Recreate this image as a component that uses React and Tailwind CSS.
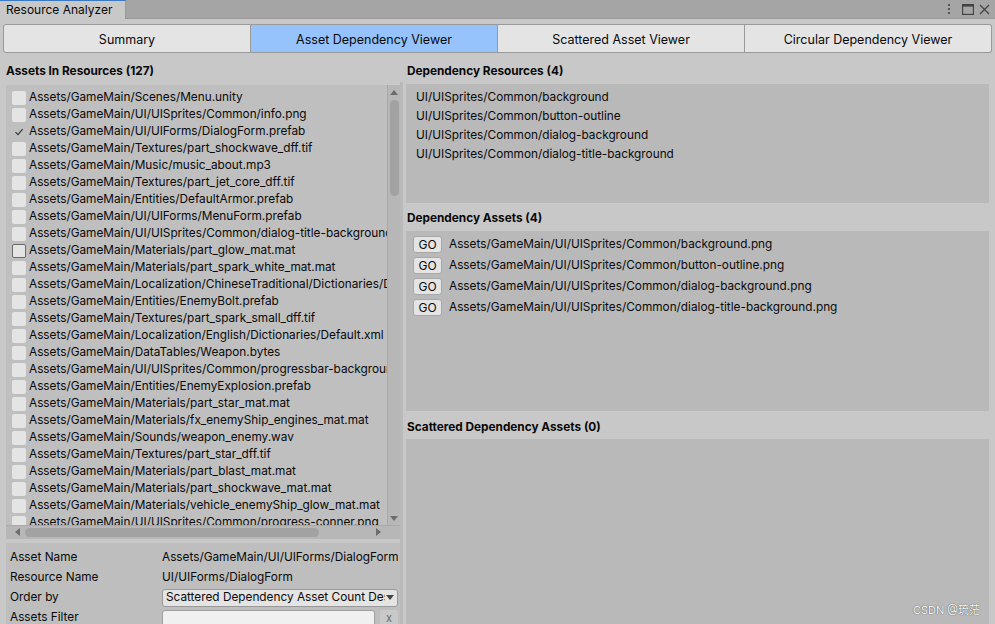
import React from "react";

const assets = [
  "Assets/GameMain/Scenes/Menu.unity",
  "Assets/GameMain/UI/UISprites/Common/info.png",
  "Assets/GameMain/UI/UIForms/DialogForm.prefab",
  "Assets/GameMain/Textures/part_shockwave_dff.tif",
  "Assets/GameMain/Music/music_about.mp3",
  "Assets/GameMain/Textures/part_jet_core_dff.tif",
  "Assets/GameMain/Entities/DefaultArmor.prefab",
  "Assets/GameMain/UI/UIForms/MenuForm.prefab",
  "Assets/GameMain/UI/UISprites/Common/dialog-title-background.png",
  "Assets/GameMain/Materials/part_glow_mat.mat",
  "Assets/GameMain/Materials/part_spark_white_mat.mat",
  "Assets/GameMain/Localization/ChineseTraditional/Dictionaries/Default.xml",
  "Assets/GameMain/Entities/EnemyBolt.prefab",
  "Assets/GameMain/Textures/part_spark_small_dff.tif",
  "Assets/GameMain/Localization/English/Dictionaries/Default.xml",
  "Assets/GameMain/DataTables/Weapon.bytes",
  "Assets/GameMain/UI/UISprites/Common/progressbar-background.png",
  "Assets/GameMain/Entities/EnemyExplosion.prefab",
  "Assets/GameMain/Materials/part_star_mat.mat",
  "Assets/GameMain/Materials/fx_enemyShip_engines_mat.mat",
  "Assets/GameMain/Sounds/weapon_enemy.wav",
  "Assets/GameMain/Textures/part_star_dff.tif",
  "Assets/GameMain/Materials/part_blast_mat.mat",
  "Assets/GameMain/Materials/part_shockwave_mat.mat",
  "Assets/GameMain/Materials/vehicle_enemyShip_glow_mat.mat",
  "Assets/GameMain/UI/UISprites/Common/progress-conner.png",
];

const resources = [
  "UI/UISprites/Common/background",
  "UI/UISprites/Common/button-outline",
  "UI/UISprites/Common/dialog-background",
  "UI/UISprites/Common/dialog-title-background",
];

const depAssets = [
  "Assets/GameMain/UI/UISprites/Common/background.png",
  "Assets/GameMain/UI/UISprites/Common/button-outline.png",
  "Assets/GameMain/UI/UISprites/Common/dialog-background.png",
  "Assets/GameMain/UI/UISprites/Common/dialog-title-background.png",
];

const tabs = ["Summary", "Asset Dependency Viewer", "Scattered Asset Viewer", "Circular Dependency Viewer"];

function Checkbox({ checked, focused }) {
  if (checked) {
    return (
      <div className="w-[14px] h-[14px] flex items-center justify-center shrink-0">
        <svg width="10" height="10" viewBox="0 0 10 10">
          <path d="M1.5 5.2 L4 7.6 L8.6 2.2" fill="none" stroke="#333" strokeWidth="1.1" />
        </svg>
      </div>
    );
  }
  return (
    <div
      className={
        focused
          ? "w-[14px] h-[14px] shrink-0 rounded-[2px] bg-[#e4e4e4] border border-[#6b6b6b]"
          : "w-[14px] h-[14px] shrink-0 rounded-[2px] bg-[#e4e4e4]"
      }
    />
  );
}

export default function App() {
  return (
    <div
      className="relative w-[995px] h-[624px] overflow-hidden bg-[#c8c8c8] text-[11.8px] text-[#090909] flex flex-col"
      style={{ fontFamily: "Inter, 'Noto Sans', 'Noto Sans CJK SC', sans-serif" }}
    >
      {/* title bar */}
      <div className="h-[19px] shrink-0 bg-[#a5a5a5] flex items-stretch border-b border-[#999999]">
        <div className="w-[126px] bg-[#c8c8c8] border-t border-[#3a79c4] border-r border-r-[#9a9a9a] flex items-center pl-[6px] -mb-px leading-none text-[12px]">
          Resource Analyzer
        </div>
        <div className="flex-1" />
        <div className="flex items-center pr-[5px] text-[#3c3c3c]">
          <svg width="4" height="12" viewBox="0 0 4 12">
            <circle cx="2" cy="2" r="1.1" fill="#444" />
            <circle cx="2" cy="6" r="1.1" fill="#444" />
            <circle cx="2" cy="10" r="1.1" fill="#444" />
          </svg>
          <svg width="12" height="11" viewBox="0 0 12 11" className="ml-[11px]">
            <rect x="0.6" y="0.6" width="10.8" height="9.8" fill="none" stroke="#444" strokeWidth="1.2" />
            <rect x="0.6" y="0.6" width="10.8" height="2" fill="#444" />
          </svg>
          <svg width="11" height="11" viewBox="0 0 11 11" className="ml-[5px]">
            <path d="M1 1 L10 10 M10 1 L1 10" stroke="#444" strokeWidth="1.3" />
          </svg>
        </div>
      </div>

      {/* toolbar */}
      <div className="shrink-0 px-[3px] pt-[5px] flex">
        {tabs.map((t, i) => (
          <div
            key={t}
            className={
              "flex-1 h-[29px] pt-[3px] flex items-center justify-center text-[12.5px] border-y border-[#999999] " +
              (i === 0 ? "border-l rounded-l-[3px] " : "") +
              (i === 3 ? "border-r rounded-r-[3px] " : "border-r ") +
              (i === 1 ? "bg-[#96c3fb] border-[#6e9ad6]" : "bg-[#e4e4e4]")
            }
          >
            {t}
          </div>
        ))}
      </div>

      {/* body */}
      <div className="flex-1 flex min-h-0">
        {/* left column */}
        <div className="w-[400px] shrink-0 pl-[6px] flex flex-col">
          <div className="h-[18px] mt-[10px] flex items-center font-bold">Assets In Resources (127)</div>
          <div className="mt-[4px] h-[454px] w-[394px] bg-[#bfbfbf] flex flex-col shrink-0">
            <div className="flex flex-1 min-h-0">
              <div className="flex-1 min-w-0 overflow-hidden pt-[5px]">
                {assets.map((a, i) => (
                  <div key={a} className="h-[17px] flex items-center gap-[3px] pl-[6px] whitespace-nowrap">
                    <Checkbox checked={i === 2} focused={i === 9} />
                    <span>{a}</span>
                  </div>
                ))}
              </div>
              {/* vertical scrollbar */}
              <div className="w-[13px] shrink-0 bg-[#b7b7b7] border-l border-[#a9a9a9] flex flex-col items-center">
                <svg width="8" height="5" viewBox="0 0 8 5" className="mt-[5px]">
                  <path d="M0 5 L4 0 L8 5 Z" fill="#6c6c6c" />
                </svg>
                <div className="mt-[5px] w-[9px] h-[96px] rounded-full bg-[#a2a2a2]" />
                <div className="flex-1" />
                <svg width="8" height="5" viewBox="0 0 8 5" className="mb-[4px]">
                  <path d="M0 0 L4 5 L8 0 Z" fill="#6c6c6c" />
                </svg>
              </div>
            </div>
            {/* horizontal scrollbar */}
            <div className="h-[14px] shrink-0 flex items-center pr-[13px] bg-[#b7b7b7] border-t border-[#a9a9a9]">
              <svg width="5" height="8" viewBox="0 0 5 8" className="ml-[9px]">
                <path d="M5 0 L0 4 L5 8 Z" fill="#6c6c6c" />
              </svg>
              <div className="ml-[5px] w-[294px] h-[9px] rounded-full bg-[#a2a2a2]" />
              <div className="flex-1" />
              <svg width="5" height="8" viewBox="0 0 5 8" className="mr-[6px]">
                <path d="M0 0 L5 4 L0 8 Z" fill="#6c6c6c" />
              </svg>
            </div>
          </div>
          {/* details panel */}
          <div className="mt-[4px] flex-1 w-[394px] bg-[#bebebe] pt-[5px] pl-[4px] pr-[2px]">
            <div className="h-[20px] flex items-center">
              <div className="w-[152px] shrink-0">Asset Name</div>
              <div className="whitespace-nowrap overflow-hidden">Assets/GameMain/UI/UIForms/DialogForm.prefab</div>
            </div>
            <div className="h-[20px] flex items-center">
              <div className="w-[152px] shrink-0">Resource Name</div>
              <div className="whitespace-nowrap overflow-hidden">UI/UIForms/DialogForm</div>
            </div>
            <div className="h-[20px] flex items-center">
              <div className="w-[152px] shrink-0">Order by</div>
              <div className="flex-1 min-w-0 h-[18px] bg-[#e4e4e4] border border-[#999999] rounded-[3px] flex items-center pl-[3px] pr-[3px]">
                <span className="flex-1 whitespace-nowrap overflow-hidden">Scattered Dependency Asset Count Descending</span>
                <svg width="8" height="5" viewBox="0 0 8 5" className="ml-[1px] shrink-0">
                  <path d="M0 0 L4 5 L8 0 Z" fill="#444" />
                </svg>
              </div>
            </div>
            <div className="h-[20px] flex items-center">
              <div className="w-[152px] shrink-0">Assets Filter</div>
              <div className="w-[213px] h-[18px] mt-[2px] bg-[#f0f0f0] border border-[#a0a0a0] rounded-[3px]" />
              <div className="ml-[5px] w-[18px] h-[18px] mt-[2px] bg-[#c9c9c9] rounded-[2px] flex items-center justify-center text-[11px] text-[#6a6a6a]">
                x
              </div>
            </div>
          </div>
        </div>

        {/* splitter strip */}
        <div className="w-[3px] shrink-0 mt-[29px] bg-[#b9b9b9]" />

        {/* right column */}
        <div className="flex-1 pl-[3px] pr-[6px] flex flex-col">
          <div className="h-[18px] mt-[10px] pl-[1px] flex items-center font-bold">Dependency Resources (4)</div>
          <div className="mt-[3px] h-[119px] shrink-0 bg-[#b9b9b9] pt-[4px] pl-[10px]">
            {resources.map((r) => (
              <div key={r} className="h-[19px] flex items-center whitespace-nowrap">
                {r}
              </div>
            ))}
          </div>
          <div className="h-[18px] mt-[7px] pl-[1px] flex items-center font-bold">Dependency Assets (4)</div>
          <div className="mt-[3px] h-[180px] shrink-0 bg-[#b9b9b9] pt-[3px] pl-[7px]">
            {depAssets.map((r) => (
              <div key={r} className="h-[21px] flex items-center whitespace-nowrap">
                <div className="w-[29px] h-[17px] bg-[#e4e4e4] border border-[#a8a8a8] rounded-[3px] flex items-center justify-center text-[12px]">
                  GO
                </div>
                <span className="ml-[7px]">{r}</span>
              </div>
            ))}
          </div>
          <div className="h-[18px] mt-[8px] pl-[1px] flex items-center font-bold">Scattered Dependency Assets (0)</div>
          <div className="mt-[2px] flex-1 bg-[#b9b9b9]" />
        </div>
      </div>

      {/* watermark */}
      <div
        className="absolute right-[15px] bottom-[8px] text-[11px] text-[#f4f4f4] leading-none"
        style={{ textShadow: "0 0 1px #666, 0 0 1px #666" }}
      >
        CSDN @琉茫
      </div>
    </div>
  );
}
